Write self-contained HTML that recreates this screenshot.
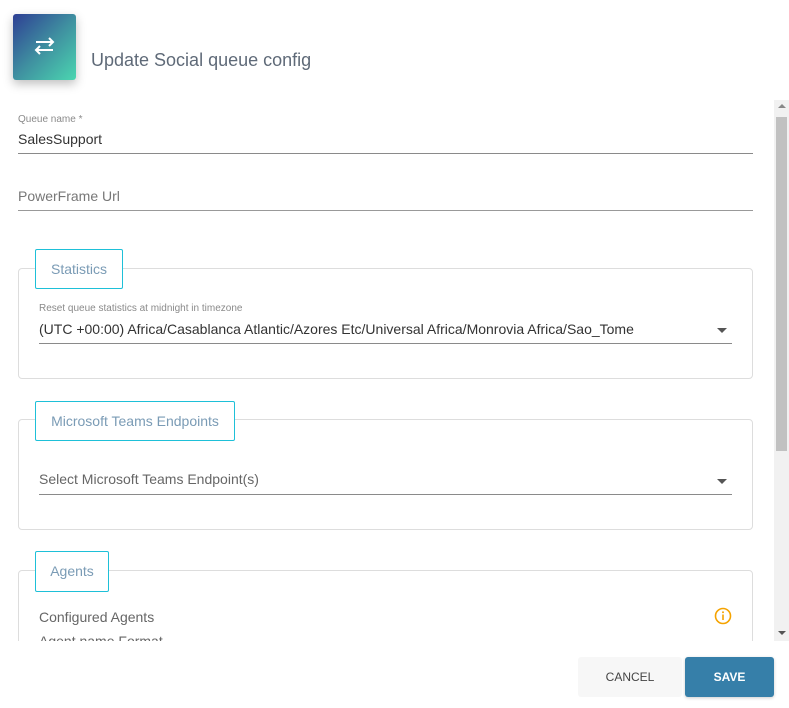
<!DOCTYPE html>
<html><head><style>
*{box-sizing:border-box;margin:0;padding:0}
body{width:789px;height:708px;background:#fff;font-family:"Liberation Sans",sans-serif;position:relative;overflow:hidden}
.a{position:absolute}
.icon{left:13px;top:14px;width:63px;height:66px;border-radius:3px;background:linear-gradient(135deg,#2e3f94,#3f8fa0 50%,#4bd6b0);box-shadow:0 4px 10px rgba(0,0,0,.25)}
.title{left:91px;top:50px;font-size:18px;color:#5f6a78}
.lbl{font-size:10px;color:#8a8a8a}
.val{font-size:14px;color:#333}
.line{height:1px;background:#8a8a8a}
.box{border:1px solid #ddd;border-radius:4px}
.leg{border:1px solid #1ec0d8;border-radius:2px;background:#fff;font-size:14px;color:#7a9bb5;text-align:center}
.caret{width:0;height:0;border-left:5px solid transparent;border-right:5px solid transparent;border-top:5px solid #555}
</style></head><body>
<div class="a icon"><svg width="63" height="66" viewBox="0 0 63 66"><g stroke="#fff" stroke-width="2" fill="none"><path d="M23 28H40M36 24l4 4-4 4"/><path d="M40 36H23M27 32l-4 4 4 4"/></g></svg></div>
<div class="a title">Update Social queue config</div>
<div class="a lbl" style="left:18px;top:114px">Queue name *</div>
<div class="a val" style="left:18px;top:131px">SalesSupport</div>
<div class="a line" style="left:18px;top:153px;width:735px"></div>
<div class="a val" style="left:18px;top:188px;color:#777">PowerFrame Url</div>
<div class="a line" style="left:18px;top:210px;width:735px;background:#999"></div>

<div class="a box" style="left:18px;top:268px;width:735px;height:111px"></div>
<div class="a leg" style="left:35px;top:249px;width:88px;height:40px;line-height:38px">Statistics</div>
<div class="a lbl" style="left:39px;top:303px">Reset queue statistics at midnight in timezone</div>
<div class="a val" style="left:39px;top:321px">(UTC +00:00) Africa/Casablanca Atlantic/Azores Etc/Universal Africa/Monrovia Africa/Sao_Tome</div>
<div class="a caret" style="left:717px;top:328px"></div>
<div class="a line" style="left:39px;top:343px;width:693px"></div>

<div class="a box" style="left:18px;top:419px;width:735px;height:111px"></div>
<div class="a leg" style="left:35px;top:401px;width:200px;height:40px;line-height:38px">Microsoft Teams Endpoints</div>
<div class="a val" style="left:39px;top:471px;color:#666">Select Microsoft Teams Endpoint(s)</div>
<div class="a caret" style="left:717px;top:479px"></div>
<div class="a line" style="left:39px;top:494px;width:693px"></div>

<div class="a" style="left:0;top:0;width:789px;height:641px;overflow:hidden">
<div class="a box" style="left:18px;top:570px;width:735px;height:120px"></div>
<div class="a leg" style="left:35px;top:551px;width:74px;height:41px;line-height:39px">Agents</div>
<div class="a val" style="left:39px;top:609px;color:#666">Configured Agents</div>
<div class="a val" style="left:39px;top:633px;color:#666">Agent name Format</div>
<svg class="a" style="left:714px;top:607px" width="18" height="18" viewBox="0 0 18 18"><circle cx="9" cy="9" r="7.5" fill="none" stroke="#f5a300" stroke-width="1.6"/><rect x="8.2" y="7.5" width="1.6" height="5.5" fill="#f5a300"/><circle cx="9" cy="5.3" r="1" fill="#f5a300"/></svg>
</div>

<div class="a" style="left:774px;top:100px;width:15px;height:541px;background:#f1f1f1"></div>
<div class="a" style="left:776px;top:117px;width:11px;height:334px;background:#c1c1c1"></div>
<div class="a" style="left:778px;top:104px;width:0;height:0;border-left:4px solid transparent;border-right:4px solid transparent;border-bottom:4px solid #888"></div>
<div class="a" style="left:778px;top:631px;width:0;height:0;border-left:4px solid transparent;border-right:4px solid transparent;border-top:4px solid #555"></div>

<div class="a" style="left:578px;top:657px;width:104px;height:40px;background:#f7f7f7;border-radius:3px;font-size:12px;color:#444;text-align:center;line-height:40px">CANCEL</div>
<div class="a" style="left:685px;top:657px;width:89px;height:40px;background:#367fa9;border-radius:3px;font-size:12px;font-weight:bold;color:#fff;text-align:center;line-height:40px;box-shadow:0 1px 3px rgba(0,0,0,.2)">SAVE</div>
</body></html>
